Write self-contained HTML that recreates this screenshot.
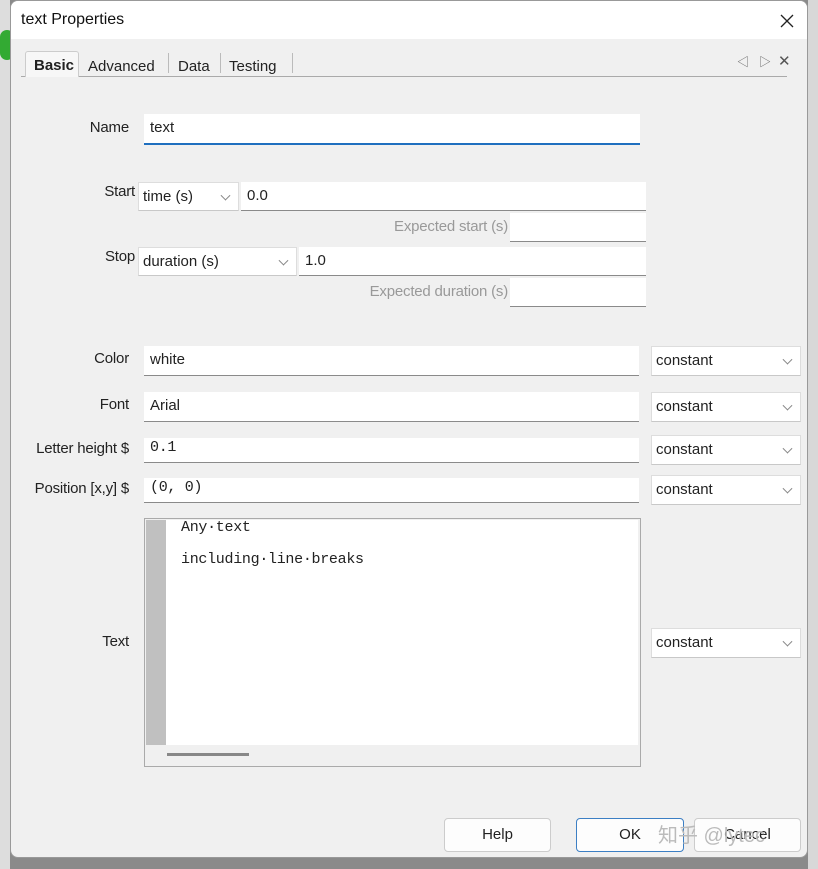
<!DOCTYPE html>
<html><head><meta charset="utf-8"><style>
*{box-sizing:border-box;margin:0;padding:0}
body{width:818px;height:869px;background:#8a8a8a;position:relative;overflow:hidden;font-family:"Liberation Sans","Noto Sans CJK SC",sans-serif;font-size:15px;color:#222}
.a{position:absolute}
.dlg{left:10px;top:0;width:798px;height:858px;background:#f0f0f0;border-radius:8px;overflow:hidden;border:1px solid #999}
.inp{position:absolute;background:#fff;border-bottom:1px solid #8a8a8a;padding-left:6px;line-height:28px;font-size:15px}
.cmb{position:absolute;background:#fff;border:1px solid #ddd;border-bottom:1px solid #c8c8c8;padding-left:4px;font-size:15px}
.cmb:after{content:"";position:absolute;right:9px;top:50%;width:6px;height:6px;border-right:1px solid #888;border-bottom:1px solid #888;transform:translateY(-70%) rotate(45deg)}
.lbl{position:absolute;text-align:right;font-size:15px;letter-spacing:-0.2px}
.mono{font-family:"Liberation Mono",monospace;font-size:15px;letter-spacing:-0.3px}
.btn{position:absolute;background:#fdfdfd;border:1px solid #ccc;border-radius:4px;text-align:center;line-height:32px;font-size:15px}
</style></head><body>
<div class="a" style="left:0;top:0;width:10px;height:869px;background:#ddd"></div>
<div class="a" style="left:808px;top:0;width:10px;height:869px;background:#d8d8d8"></div>
<div class="a" style="left:0;top:30px;width:14px;height:30px;background:#3a3;border-radius:8px"></div>
<div class="a dlg">
 <div class="a" style="left:0;top:0;width:798px;height:38px;background:#fff"></div>
 <div class="a" style="left:10px;top:10px;font-size:16px;color:#111">text Properties</div>
 <svg class="a" style="left:768px;top:12px" width="16" height="16" viewBox="0 0 16 16"><path d="M2 2L14 14M14 2L2 14" stroke="#222" stroke-width="1.3"/></svg>
 <!-- tabs -->
 <div class="a" style="left:10px;top:75px;width:766px;height:1px;background:#aaa"></div>
 <div class="a" style="left:14px;top:50px;width:54px;height:26px;background:#f7f7f7;border:1px solid #ccc;border-bottom:none;border-radius:3px 3px 0 0"></div>
 <div class="a" style="left:23px;top:56px;font-weight:bold;font-size:15px">Basic</div>
 <div class="a" style="left:77px;top:57px;font-size:15px">Advanced</div>
 <div class="a" style="left:157px;top:52px;width:1px;height:20px;background:#bbb"></div>
 <div class="a" style="left:167px;top:57px;font-size:15px">Data</div>
 <div class="a" style="left:209px;top:52px;width:1px;height:20px;background:#bbb"></div>
 <div class="a" style="left:218px;top:57px;font-size:15px">Testing</div>
 <div class="a" style="left:281px;top:52px;width:1px;height:20px;background:#bbb"></div>
 <div class="a" style="left:726px;top:52px;font-size:12px;color:#666">◁&nbsp;&nbsp;&nbsp;▷</div>
 <div class="a" style="left:767px;top:51px;font-size:15px;color:#555">✕</div>
 <!-- Name -->
 <div class="lbl" style="left:40px;top:118px;width:78px">Name</div>
 <div class="inp" style="left:133px;top:113px;width:496px;height:31px;border-bottom:2px solid #1f6fbf">text</div>
 <!-- Start -->
 <div class="lbl" style="left:70px;top:182px;width:54px">Start</div>
 <div class="cmb" style="left:127px;top:181px;width:101px;height:29px;line-height:27px">time (s)</div>
 <div class="inp" style="left:230px;top:181px;width:405px;height:29px">0.0</div>
 <div class="lbl" style="left:300px;top:217px;width:197px;color:#999">Expected start (s)</div>
 <div class="inp" style="left:499px;top:212px;width:136px;height:29px"></div>
 <div class="lbl" style="left:70px;top:247px;width:54px">Stop</div>
 <div class="cmb" style="left:127px;top:246px;width:159px;height:29px;line-height:27px">duration (s)</div>
 <div class="inp" style="left:288px;top:246px;width:347px;height:29px">1.0</div>
 <div class="lbl" style="left:300px;top:282px;width:197px;color:#999">Expected duration (s)</div>
 <div class="inp" style="left:499px;top:277px;width:136px;height:29px"></div>
 <!-- props -->
 <div class="lbl" style="left:0;top:349px;width:118px">Color</div>
 <div class="inp" style="left:133px;top:345px;width:495px;height:30px">white</div>
 <div class="cmb" style="left:640px;top:345px;width:150px;height:30px;line-height:28px">constant</div>
 <div class="lbl" style="left:0;top:395px;width:118px">Font</div>
 <div class="inp" style="left:133px;top:391px;width:495px;height:30px">Arial</div>
 <div class="cmb" style="left:640px;top:391px;width:150px;height:30px;line-height:28px">constant</div>
 <div class="lbl" style="left:0;top:439px;width:118px">Letter height $</div>
 <div class="inp mono" style="left:133px;top:437px;width:495px;height:25px;line-height:20px">0.1</div>
 <div class="cmb" style="left:640px;top:434px;width:150px;height:30px;line-height:28px">constant</div>
 <div class="lbl" style="left:0;top:479px;width:118px">Position [x,y] $</div>
 <div class="inp mono" style="left:133px;top:477px;width:495px;height:25px;line-height:20px">(0, 0)</div>
 <div class="cmb" style="left:640px;top:474px;width:150px;height:30px;line-height:28px">constant</div>
 <!-- text editor -->
 <div class="a" style="left:133px;top:517px;width:497px;height:249px;background:#f0f0f0;border:1px solid #aaa"></div>
 <div class="a" style="left:135px;top:519px;width:20px;height:225px;background:#c0c0c0"></div>
 <div class="a" style="left:155px;top:519px;width:472px;height:225px;background:#fff"></div>
 <div class="a mono" style="left:170px;top:511px;line-height:32px">Any·text<br>including·line·breaks</div>
 <div class="a" style="left:156px;top:752px;width:82px;height:3px;background:#888"></div>
 <div class="lbl" style="left:0;top:632px;width:118px">Text</div>
 <div class="cmb" style="left:640px;top:627px;width:150px;height:30px;line-height:28px">constant</div>
 <!-- buttons -->
 <div class="btn" style="left:433px;top:817px;width:107px;height:34px">Help</div>
 <div class="btn" style="left:565px;top:817px;width:108px;height:34px;border:1px solid #3c7fc4">OK</div>
 <div class="btn" style="left:683px;top:817px;width:107px;height:34px">Cancel</div>
 <div class="a" style="left:647px;top:818px;font-size:20px;color:#bbb">知乎 @lytec</div>
</div>
</body></html>
